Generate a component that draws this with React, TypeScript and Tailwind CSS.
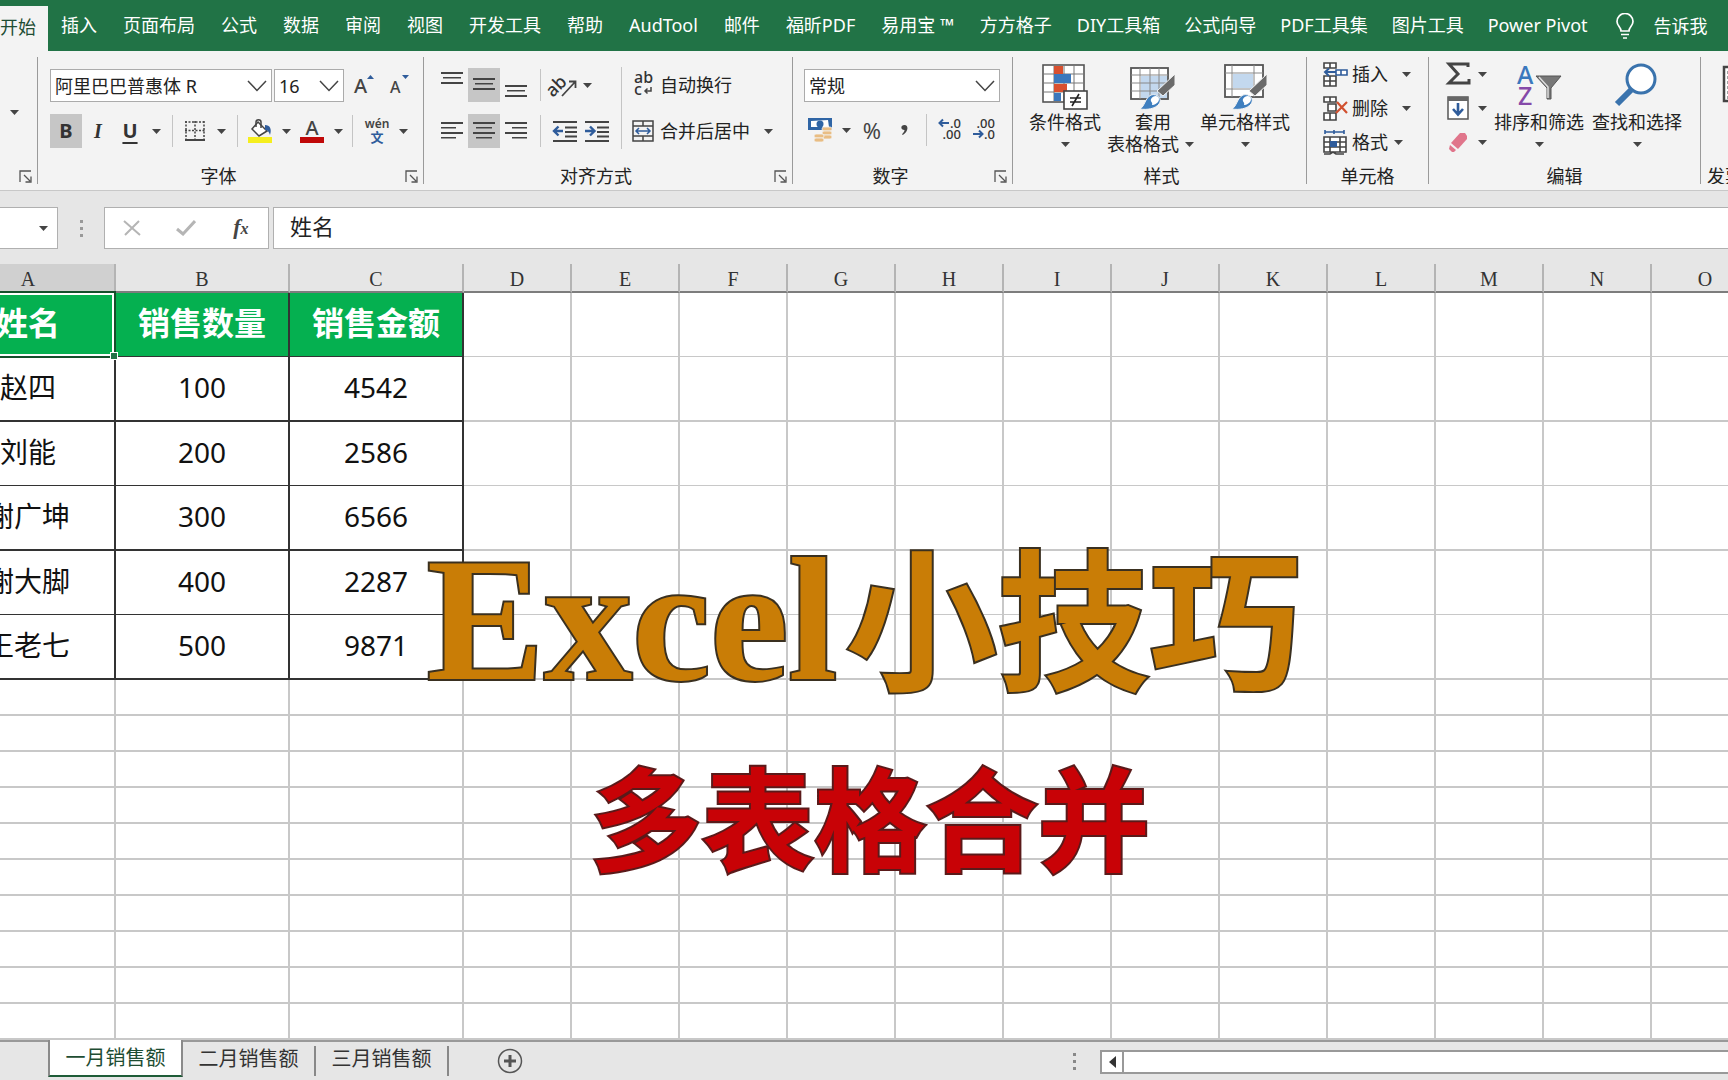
import { ReactNode } from "react";
import clsx from "clsx";

const MENU = [
  "插入",
  "页面布局",
  "公式",
  "数据",
  "审阅",
  "视图",
  "开发工具",
  "帮助",
  "AudTool",
  "邮件",
  "福昕PDF",
  "易用宝 ™",
  "方方格子",
  "DIY工具箱",
  "公式向导",
  "PDF工具集",
  "图片工具",
  "Power Pivot",
];

const COLUMNS = "ABCDEFGHIJKLMNOPQ".split("");

const ROWS = [
  ["姓名", "销售数量", "销售金额"],
  ["赵四", "100", "4542"],
  ["刘能", "200", "2586"],
  ["谢广坤", "300", "6566"],
  ["谢大脚", "400", "2287"],
  ["王老七", "500", "9871"],
];

const SHEETS = ["一月销售额", "二月销售额", "三月销售额"];

function Caret({ className = "w-5" }: { className?: string }) {
  return (
    <span className={clsx("flex shrink-0 justify-center", className)}>
      <svg width="9" height="5" viewBox="0 0 9 5">
        <path d="M0 0h9L4.500 5z" fill="#444" />
      </svg>
    </span>
  );
}

function IconButton({
  label,
  active,
  className = "w-8",
  children,
}: {
  label: string;
  active?: boolean;
  className?: string;
  children: ReactNode;
}) {
  return (
    <button
      aria-label={label}
      className={clsx(
        "flex h-[34px] shrink-0 items-center justify-center",
        className,
        active && "bg-[#c6c6c6]",
      )}
    >
      {children}
    </button>
  );
}

function Divider({ className = "mx-1" }: { className?: string }) {
  return <span className={clsx("h-8 w-px shrink-0 bg-[#c4c4c4]", className)} />;
}

function Dropdown({
  label,
  value,
  className,
}: {
  label: string;
  value: string;
  className: string;
}) {
  return (
    <div className={clsx("relative h-[33px] shrink-0", className)}>
      <select
        aria-label={label}
        className="h-full w-full appearance-none border border-[#ababab] bg-white px-1 text-lg leading-6"
      >
        <option>{value}</option>
      </select>
      <svg
        className="pointer-events-none absolute right-[5px] top-[11px]"
        width="20"
        height="12"
        viewBox="0 0 20 12"
        fill="none"
        stroke="#444"
        strokeWidth="1.500"
      >
        <path d="M1 1l9 9.500L19 1" />
      </svg>
    </div>
  );
}

function Group({
  title,
  className,
  launcher,
  children,
}: {
  title: string;
  className: string;
  launcher?: boolean;
  children: ReactNode;
}) {
  return (
    <section className={clsx("my-1.5 flex shrink-0 flex-col border-r border-[#9a9a9a]", className)}>
      <div className="flex h-[111px]">{children}</div>
      <div className="flex h-4 items-center">
        <h2 className="flex-1 whitespace-nowrap text-center text-lg leading-6">{title}</h2>
        {launcher && <Launcher />}
      </div>
    </section>
  );
}

function Launcher() {
  return (
    <button aria-label="更多选项" className="w-6 pl-1.5">
      <svg width="13" height="13" viewBox="0 0 13 13" fill="none" stroke="#555" strokeWidth="1.300">
        <path d="M1 12V1h11M5 5l6 6M12 6.500V12H6.500" />
      </svg>
    </button>
  );
}

// horizontal strokes for the alignment buttons: [x, width] per line
function Lines({ rows, y = 2 }: { rows: number[][]; y?: number }) {
  return (
    <svg width="22" height="22" viewBox="0 0 22 22" fill="#444">
      {rows.map(([x, w], i) => (
        <rect key={i} x={x} y={y + i * 5} width={w} height={i % 2 ? 1.5 : 2} />
      ))}
    </svg>
  );
}

function Indent({ right }: { right?: boolean }) {
  return (
    <svg width="24" height="22" viewBox="0 0 24 22">
      <path d="M0 2h24M12 7.500h12M12 12h12M12 16.500h12M0 21h24" stroke="#444" strokeWidth="1.800" />
      <path
        d={right ? "M0 11h9M5 6.500l4.500 4.500L5 15.500" : "M10 11H1.500M5.500 6.500L1 11l4.500 4.500"}
        stroke="#2f5c9b"
        strokeWidth="2.400"
        fill="none"
      />
    </svg>
  );
}

function Brush() {
  return (
    <>
      <path d="M45 11v11L33 33l-6-5z" fill="#6a6a6a" stroke="#f3f3f3" />
      <path d="M10 46c5-3 5-11 11-14 6-2 12 4 8 9-4 5-12 6-19 5z" fill="#3f7fbf" stroke="#f3f3f3" />
      <path d="M21 36c2-4 8-4 8 0s-5 6-7 6c1-3-2-3-1-6z" fill="#fff" />
    </>
  );
}

function ConditionalIcon() {
  return (
    <svg width="48" height="48" viewBox="0 0 48 48">
      <rect x="2" y="2" width="41" height="37" fill="#fff" stroke="#555" strokeWidth="1.600" />
      <path d="M13 2v37M23 2v37M33 2v37M2 11h41M2 20h41M2 29h41" stroke="#777" />
      <path d="M13 3h9v8h-9zM13 21h13v8H13z" fill="#d9502f" />
      <path d="M13 11h17v9H13zM13 30h7v8h-7z" fill="#3b78bd" />
      <rect x="23" y="28" width="23" height="18" fill="#fff" stroke="#444" strokeWidth="1.600" />
      <path d="M29 35h11M29 39h11M38 31l-7 12" stroke="#222" strokeWidth="1.600" />
    </svg>
  );
}

function TableFormatIcon() {
  return (
    <svg width="46" height="48" viewBox="0 0 46 48">
      <rect x="1" y="5" width="37" height="31" fill="#fff" stroke="#555" strokeWidth="1.800" />
      <path d="M11 13h26v22H11z" fill="#c3d8ee" />
      <path d="M10 5v31M20 5v31M29 5v31M1 12h37M1 20h37M1 28h37" stroke="#888" />
      <Brush />
    </svg>
  );
}

function CellStyleIcon() {
  return (
    <svg width="46" height="48" viewBox="0 0 46 48">
      <rect x="3" y="2" width="38" height="32" fill="#fff" stroke="#555" strokeWidth="1.800" />
      <path d="M10 2v32M32 2v32M3 10h38M3 26h38" stroke="#888" />
      <path d="M11 11h20v14H11z" fill="#c3d8ee" />
      <Brush />
    </svg>
  );
}

function BigButton({
  icon,
  lines,
  className,
}: {
  icon: ReactNode;
  lines: string[];
  className: string;
}) {
  return (
    <button
      className={clsx(
        "flex shrink-0 flex-col items-center pt-1.5 text-lg leading-[22px]",
        className,
      )}
    >
      {icon}
      <span className="whitespace-nowrap">{lines[0]}</span>
      <span className="flex h-[22px] items-center whitespace-nowrap">
        {lines[1]}
        <Caret />
      </span>
    </button>
  );
}

function CellButton({ icon, text, wide }: { icon: ReactNode; text: string; wide?: boolean }) {
  return (
    <button className="flex h-[34px] items-center text-lg">
      {icon}
      <span className="ml-1">{text}</span>
      <Caret className={wide ? "w-9" : "w-5"} />
    </button>
  );
}

function Ribbon() {
  return (
    <div className="flex h-[140px] shrink-0 overflow-hidden border-b border-[#c8c8c8] bg-[#f3f3f3] [&_svg]:overflow-visible">
      <section className="my-1.5 flex w-[38px] shrink-0 flex-col border-r border-[#9a9a9a]">
        <div className="flex h-[111px] flex-col justify-center pl-1">
          <IconButton label="复制选项" className="w-5">
            <Caret />
          </IconButton>
        </div>
        <div className="flex h-4 items-center justify-end">
          <Launcher />
        </div>
      </section>

      <Group title="字体" launcher className="w-[386px]">
        <div className="flex flex-col gap-[11px] pl-3 pt-3">
          <div className="flex gap-0.5">
            <Dropdown label="字体" value="阿里巴巴普惠体 R" className="w-[222px]" />
            <Dropdown label="字号" value="16" className="w-[70px]" />
            <IconButton label="增大字号" className="w-9">
              <svg width="22" height="24" viewBox="0 0 22 24">
                <text x="1" y="19" fontSize="20" fontWeight="500" fill="#444">A</text>
                <path d="M14 5l3.500-4L21 5z" fill="#2f5c9b" />
              </svg>
            </IconButton>
            <IconButton label="减小字号">
              <svg width="22" height="24" viewBox="0 0 22 24">
                <text x="1" y="19" fontSize="16" fontWeight="500" fill="#444">A</text>
                <path d="M13 1l3.500 4L20 1z" fill="#2f5c9b" />
              </svg>
            </IconButton>
          </div>
          <div className="flex items-center text-xl text-[#333]">
            <IconButton label="加粗" active>
              <b>B</b>
            </IconButton>
            <IconButton label="倾斜">
              <i className="font-['Liberation_Serif',serif] font-bold">I</i>
            </IconButton>
            <IconButton label="下划线">
              <b className="underline underline-offset-4">U</b>
            </IconButton>
            <Caret />
            <Divider className="mx-1.5" />
            <IconButton label="边框">
              <svg width="20" height="20" viewBox="0 0 20 20" stroke="#444">
                <path d="M0 1h20M1 0v18M19 0v18M10 0v18M0 9.500h20" strokeDasharray="2 1.500" strokeWidth="1.500" />
                <path d="M0 19h20" strokeWidth="2" />
              </svg>
            </IconButton>
            <Caret />
            <Divider className="mx-1.5" />
            <IconButton label="填充颜色">
              <svg width="24" height="24" viewBox="0 0 24 24">
                <path d="M10 3l9 9-8 5-7-7z" fill="#fff" stroke="#444" strokeWidth="1.500" />
                <path d="M8 8V3c0-3 5-3 5 0v6" fill="none" stroke="#444" strokeWidth="1.500" />
                <path d="M17 6c5 0 7 4 5 10-1-3-2-5-5-5z" fill="#2f5c9b" />
                <path d="M0 18h24v6H0z" fill="#f5ee1e" />
              </svg>
            </IconButton>
            <Caret />
            <IconButton label="字体颜色">
              <svg width="24" height="24" viewBox="0 0 24 24">
                <text x="12" y="16" fontSize="20" fontWeight="500" textAnchor="middle" fill="#444">A</text>
                <path d="M0 18h24v6H0z" fill="#c00808" />
              </svg>
            </IconButton>
            <Caret />
            <Divider />
            <IconButton label="拼音" className="w-10">
              <svg width="26" height="28" viewBox="0 0 26 28" textAnchor="middle">
                <text x="13" y="11" fontSize="12" fontWeight="600" fill="#444">wén</text>
                <text x="13" y="25" fontSize="13" fontWeight="700" fill="#2f5c9b">文</text>
              </svg>
            </IconButton>
            <Caret className="w-3" />
          </div>
        </div>
      </Group>

      <Group title="对齐方式" launcher className="w-[369px]">
        <div className="flex flex-col gap-3 pl-3 pt-[11px]">
          <div className="flex items-center">
            <IconButton label="顶端对齐">
              <Lines y={-2} rows={[[0, 22], [2, 18], [0, 22]]} />
            </IconButton>
            <IconButton label="垂直居中" active>
              <Lines y={4} rows={[[0, 22], [2, 18], [0, 22]]} />
            </IconButton>
            <IconButton label="底端对齐">
              <Lines y={11} rows={[[0, 22], [2, 18], [0, 22]]} />
            </IconButton>
            <Divider className="mx-2" />
            <IconButton label="方向">
              <svg width="28" height="26" viewBox="0 0 28 26">
                <text x="-5" y="18" fontSize="18" fontWeight="500" fill="#333" transform="rotate(-45 8 14)">ab</text>
                <path d="M11 24L24 10M18 9.500h6.500V16" fill="none" stroke="#444" strokeWidth="1.800" />
              </svg>
            </IconButton>
            <Caret className="w-3" />
          </div>
          <div className="flex items-center">
            <IconButton label="左对齐">
              <Lines rows={[[0, 22], [0, 15], [0, 22], [0, 15]]} />
            </IconButton>
            <IconButton label="居中" active>
              <Lines rows={[[0, 22], [3, 16], [0, 22], [3, 16]]} />
            </IconButton>
            <IconButton label="右对齐">
              <Lines rows={[[0, 22], [7, 15], [0, 22], [7, 15]]} />
            </IconButton>
            <Divider className="mx-2" />
            <IconButton label="减少缩进量">
              <Indent />
            </IconButton>
            <IconButton label="增加缩进量">
              <Indent right />
            </IconButton>
          </div>
        </div>
        <div className="ml-2 mt-2.5 h-[82px] w-px bg-[#c4c4c4]" />
        <div className="flex flex-col gap-3 pl-2.5 pt-[11px] text-lg">
          <button className="flex h-[34px] items-center gap-1.5">
            <svg width="22" height="24" viewBox="0 0 22 24">
              <text x="2" y="10" fontSize="16" fontWeight="500" fill="#333">ab</text>
              <text x="2" y="22" fontSize="16" fontWeight="500" fill="#333">c</text>
              <path d="M19 14v4h-6M15.500 15.500L13 18l2.500 2.500" fill="none" stroke="#444" strokeWidth="1.500" />
            </svg>
            自动换行
          </button>
          <button className="flex h-[34px] items-center gap-1.5">
            <svg width="22" height="22" viewBox="0 0 22 22" fill="none" stroke="#444" strokeWidth="1.500">
              <path d="M1 1h20v20H1zM1 6h20M1 16h20M11 1v5M11 16v5" />
              <path d="M4 11h14M7 8l-3 3 3 3M15 8l3 3-3 3" stroke="#2f5c9b" />
            </svg>
            合并后居中
            <Caret className="w-6" />
          </button>
        </div>
      </Group>

      <Group title="数字" launcher className="w-[220px]">
        <div className="flex flex-col gap-[11px] pl-[11px] pt-3">
          <Dropdown label="数字格式" value="常规" className="w-[196px]" />
          <div className="flex items-center text-[22px] text-[#444]">
            <IconButton label="会计数字格式">
              <svg width="26" height="26" viewBox="0 0 26 26">
                <path d="M1 1h24v12H1z" fill="#2f65a5" />
                <path d="M4 4l17-1 1 7H4z" fill="#fff" />
                <circle cx="13" cy="7" r="3.500" fill="#2f65a5" />
                <g fill="#e9bd83" stroke="#f3f3f3" strokeWidth=".8">
                  <rect x="15" y="10" width="10" height="4" rx="2" />
                  <rect x="15" y="14" width="10" height="4" rx="2" />
                  <rect x="15" y="18" width="10" height="4" rx="2" />
                  <rect x="7" y="17" width="10" height="4" rx="2" />
                  <rect x="7" y="21" width="10" height="4" rx="2" />
                </g>
              </svg>
            </IconButton>
            <Caret />
            <IconButton label="百分比样式">%</IconButton>
            <IconButton label="千位分隔样式">
              <svg width="7" height="10" viewBox="0 0 8 12">
                <path d="M4 0c5 0 5 8-2 12l-1-1c2-2 3-3 3-5C-1 6-1 0 4 0z" fill="#444" />
              </svg>
            </IconButton>
            <Divider className="mx-1.5" />
            <IconButton label="增加小数位数">
              <svg width="24" height="24" viewBox="0 0 24 24" textAnchor="end" fontSize="13" fontWeight="500" fill="#333">
                <text x="24" y="10">.0</text>
                <text x="24" y="21">.00</text>
                <path d="M12 5H3M6 1.500L2.500 5 6 8.500" fill="none" stroke="#2f5c9b" strokeWidth="2" />
              </svg>
            </IconButton>
            <IconButton label="减少小数位数" className="w-9">
              <svg width="24" height="24" viewBox="0 0 24 24" textAnchor="end" fontSize="13" fontWeight="500" fill="#333">
                <text x="24" y="10">.00</text>
                <text x="24" y="21">.0</text>
                <path d="M2 16h9M8 12.500l3.500 3.500L8 19.500" fill="none" stroke="#2f5c9b" strokeWidth="2" />
              </svg>
            </IconButton>
          </div>
        </div>
      </Group>

      <Group title="样式" className="w-[294px] pl-1">
        <BigButton icon={<ConditionalIcon />} lines={["条件格式"]} className="w-24" />
        <BigButton icon={<TableFormatIcon />} lines={["套用", "表格格式"]} className="w-20" />
        <BigButton icon={<CellStyleIcon />} lines={["单元格样式"]} className="w-[104px]" />
      </Group>

      <Group title="单元格" className="w-[122px]">
        <div className="flex flex-col pl-4">
          <CellButton
            wide
            text="插入"
            icon={
              <svg width="25" height="25" viewBox="0 0 25 25" fill="#fff" stroke="#444" strokeWidth="1.600">
                <path d="M1 1h6v5H1zM7 1h6v5H7zM1 19h6v5H1zM7 19h6v5H7zM1 14h6v5H1zM7 14h6v5H7z" />
                <path d="M13 8h11v5H13zM18 8v5" stroke="#2f5c9b" />
                <path d="M13 10H2M6 6.500L2 10l4 4" fill="none" stroke="#2f5c9b" strokeWidth="2" />
              </svg>
            }
          />
          <CellButton
            wide
            text="删除"
            icon={
              <svg width="25" height="25" viewBox="0 0 25 25" fill="#fff" stroke="#444" strokeWidth="1.600">
                <path d="M1 1h6v5H1zM7 1h6v5H7zM5 8h8v7H5zM1 17h6v7H1zM7 17h6v7H7z" />
                <path d="M14 6l10 11M24 6L13 17" stroke="#d1502f" strokeWidth="2.200" />
              </svg>
            }
          />
          <CellButton
            text="格式"
            icon={
              <svg width="25" height="25" viewBox="0 0 25 25" fill="#fff" stroke="#444" strokeWidth="1.600">
                <path d="M1 7h22v15H1zM1 12h22M1 17h22M7 7v15M17 7v15M1 24h6l3-2 3 2h8" />
                <path d="M2 2h19M2 0v4M21 0v4M11 0v4" stroke="#2f5c9b" />
                <path d="M7 11h7v6H7z" fill="#2f5c9b" stroke="none" />
              </svg>
            }
          />
        </div>
      </Group>

      <Group title="编辑" className="w-[272px]">
        <div className="flex flex-col pl-[13px]">
          <button aria-label="自动求和" className="flex h-[34px] items-center">
            <span className="flex w-8 justify-center">
              <svg width="24" height="24" viewBox="0 0 24 24">
                <path d="M22 5V2H3l9 10-9 9h20v-4" fill="none" stroke="#444" strokeWidth="3" />
              </svg>
            </span>
            <Caret className="w-4" />
          </button>
          <button aria-label="填充" className="flex h-[34px] items-center">
            <span className="flex w-8 justify-center">
              <svg width="22" height="24" viewBox="0 0 22 24">
                <path d="M1 1h20v22H1z" fill="#fff" stroke="#555" strokeWidth="1.500" />
                <path d="M1 1h20v4H1z" fill="#666" />
                <path d="M11 7v11M6 13l5 5.500 5-5.500" fill="none" stroke="#2f5c9b" strokeWidth="2.600" />
              </svg>
            </span>
            <Caret className="w-4" />
          </button>
          <button aria-label="清除" className="flex h-[34px] items-center">
            <span className="flex w-8 justify-center">
              <svg width="22" height="22" viewBox="0 0 22 22">
                <path d="M13 2h5l2 3v3l-9 10-7-6z" fill="#e0758b" />
                <path d="M3 14l6 5-2 2H5l-3-3z" fill="#e0758b" />
              </svg>
            </span>
            <Caret className="w-4" />
          </button>
        </div>
        <BigButton
          className="w-[98px]"
          lines={["排序和筛选"]}
          icon={
            <svg width="48" height="48" viewBox="0 0 48 48">
              <text x="2" y="21" fontSize="25" fontWeight="500" fill="#3b78bd">A</text>
              <text x="3" y="42" fontSize="25" fontWeight="500" fill="#8549a8">Z</text>
              <path d="M21 13h25L36 25v11h-4V25z" fill="#777" stroke="#555" />
              <path d="M24 14l9 10v11" fill="none" stroke="#ddd" strokeWidth="1.500" />
            </svg>
          }
        />
        <BigButton
          className="w-[98px]"
          lines={["查找和选择"]}
          icon={
            <svg width="48" height="48" viewBox="0 0 48 48">
              <path d="M18 27L4 41" stroke="#3a73ad" strokeWidth="6" />
              <circle cx="28" cy="16" r="14" fill="#fff" stroke="#3a73ad" strokeWidth="3" />
            </svg>
          }
        />
      </Group>

      <section className="my-1.5 flex min-w-0 flex-1 flex-col overflow-hidden pl-1.5">
        <button aria-label="发票查验" className="flex h-[111px] items-start pl-3.5">
          <svg className="mt-2 shrink-0" width="30" height="38" viewBox="0 0 30 38">
            <path d="M3 2h27v34H3z" fill="#fff" stroke="#444" strokeWidth="2.500" />
            <path d="M8 6v28" stroke="#444" strokeWidth="3" strokeDasharray="3 2" />
          </svg>
        </button>
        <h2 className="h-4 whitespace-nowrap text-lg leading-4">发票</h2>
      </section>
    </div>
  );
}

function FormulaBar() {
  return (
    <div className="flex h-[73px] shrink-0 bg-[#e6e6e6] pb-[15px] pt-4">
      <button
        aria-label="名称框"
        className="flex w-[58px] shrink-0 items-center justify-end border border-l-0 border-[#b0b0b0] bg-white pr-1"
      >
        <Caret />
      </button>
      <div className="flex w-[46px] shrink-0 flex-col items-center justify-center gap-1">
        <i className="h-[3px] w-[3px] bg-[#999]" />
        <i className="h-[3px] w-[3px] bg-[#999]" />
        <i className="h-[3px] w-[3px] bg-[#999]" />
      </div>
      <div className="flex w-[165px] shrink-0 items-center border border-[#b0b0b0] bg-white">
        <button aria-label="取消" className="flex flex-1 justify-center">
          <svg width="18" height="16" viewBox="0 0 18 16" stroke="#b5b5b5" strokeWidth="2">
            <path d="M1 1l16 14M16 1L2 15" />
          </svg>
        </button>
        <button aria-label="输入" className="flex flex-1 justify-center">
          <svg width="20" height="16" viewBox="0 0 20 16" fill="none" stroke="#b5b5b5" strokeWidth="3">
            <path d="M1 9l6 5L19 1" />
          </svg>
        </button>
        <button
          aria-label="插入函数"
          className="flex-1 font-['Liberation_Serif',serif] text-[22px] font-bold italic leading-6 text-[#444]"
        >
          f<span className="text-base">x</span>
        </button>
      </div>
      <input
        aria-label="编辑栏"
        defaultValue="姓名"
        className="ml-1 min-w-0 flex-1 border border-r-0 border-[#b0b0b0] bg-white px-4 pb-1 text-[22px] leading-8"
      />
    </div>
  );
}

function Grid() {
  return (
    <div className="min-h-0 flex-1 overflow-hidden bg-white">
      <table className="-ml-[58px] w-[2034px] table-fixed border-separate border-spacing-0 text-center">
        <colgroup>
          {COLUMNS.map((c, i) => (
            <col key={c} className={i < 3 ? "w-[174px]" : "w-[108px]"} />
          ))}
        </colgroup>
        <thead>
          <tr className="h-[29px]">
            {COLUMNS.map((c, i) => (
              <th
                key={c}
                className={clsx(
                  "border-b-2 border-r-2 border-b-[#7d7d7d] border-r-[#b4b4b4] p-0 pt-[3px] font-['Liberation_Serif',serif] text-xl font-normal leading-6 text-[#333]",
                  i === 0 ? "bg-[#d0d0d0]" : "bg-[#e6e6e6]",
                )}
              >
                {c}
              </th>
            ))}
          </tr>
        </thead>
        <tbody>
          {ROWS.map((row, r) => (
            <tr key={r} className="h-[64px] even:h-[65px]">
              {COLUMNS.map((c, i) => (
                <td
                  key={c}
                  className={clsx(
                    "relative border-r-2 p-0 pb-[3px]",
                    r % 2 ? "border-b-2" : "border-b",
                    i < 3 ? "border-[#333]" : "border-[#c8c8c8]",
                    r === 0 && i < 3
                      ? "bg-[#05b050] text-[32px] font-bold leading-8 text-white"
                      : "text-[28px] leading-8 text-[#111]",
                  )}
                >
                  {row[i]}
                  {r === 0 && i === 0 && (
                    <>
                      <span className="absolute inset-0 border-2 border-white outline-2 outline-[#14502c]" />
                      <span className="absolute -bottom-1 -right-1 z-10 h-2 w-2 border border-white bg-[#217346]" />
                    </>
                  )}
                </td>
              ))}
            </tr>
          ))}
          {Array.from({ length: 10 }, (_, r) => (
            <tr key={r} className="h-9">
              {COLUMNS.map((c) => (
                <td key={c} className="border-b-2 border-r-2 border-[#c8c8c8] p-0" />
              ))}
            </tr>
          ))}
        </tbody>
      </table>
    </div>
  );
}

function SheetTabs() {
  return (
    <div className="flex h-10 shrink-0 border-t-2 border-[#999] bg-[#e6e6e6] text-[20px] leading-8 text-[#333]">
      <div className="flex shrink-0 pl-12">
        {SHEETS.map((s, i) =>
          i === 0 ? (
            <button
              key={s}
              className="-mt-0.5 h-[37px] w-[135px] border-x-2 border-b-2 border-x-[#8a8a8a] border-b-[#1e5c38] bg-white text-[#1e4d33]"
            >
              {s}
            </button>
          ) : (
            <button key={s} className="my-1 w-[133px] border-r-2 border-[#888] pb-1 leading-6">
              {s}
            </button>
          ),
        )}
        <button aria-label="新工作表" className="ml-12 flex items-center">
          <svg width="26" height="26" viewBox="0 0 26 26" fill="none" stroke="#555">
            <circle cx="13" cy="13" r="11.500" strokeWidth="1.500" />
            <path d="M13 7v12M7 13h12" strokeWidth="3" />
          </svg>
        </button>
      </div>
      <div className="flex flex-1 justify-end pr-6">
        <div className="flex flex-col justify-center gap-1">
          <i className="h-[3px] w-[3px] bg-[#888]" />
          <i className="h-[3px] w-[3px] bg-[#888]" />
          <i className="h-[3px] w-[3px] bg-[#888]" />
        </div>
      </div>
      <div className="mt-2 flex h-6 w-[628px] shrink-0 border-2 border-r-0 border-[#999] bg-white">
        <button
          aria-label="向左滚动"
          className="flex w-[22px] items-center justify-center border-r-2 border-[#999]"
        >
          <svg width="7" height="12" viewBox="0 0 7 12">
            <path d="M7 0v12L0 6z" fill="#333" />
          </svg>
        </button>
      </div>
    </div>
  );
}

export default function App() {
  return (
    <div className="relative flex h-screen flex-col overflow-hidden bg-white font-['Noto_Sans','Noto_Sans_CJK_SC',sans-serif] text-[#222]">
      <nav className="flex h-[51px] shrink-0 overflow-hidden whitespace-nowrap bg-[#217346] text-lg text-white">
        <button className="mt-1.5 w-12 shrink-0 bg-[#f3f3f3] pb-1 pr-3 text-right text-[#1e4d33]">
          <span className="-ml-4">开始</span>
        </button>
        {MENU.map((m, i) => (
          <button key={m} className={clsx("shrink-0 pb-px", i < 13 ? "px-[13px]" : "px-3")}>
            {m}
          </button>
        ))}
        <button className="ml-4 flex shrink-0 items-center gap-5">
          <svg width="18" height="26" viewBox="0 0 18 26" fill="none" stroke="#fff" strokeWidth="1.700">
            <path d="M5 18c0-4-4-5-4-9.500a8 8 0 0 1 16 0C17 13 13 14 13 18zM5 21.500h8M7 25h4" />
          </svg>
          告诉我
        </button>
      </nav>
      <Ribbon />
      <FormulaBar />
      <Grid />
      <SheetTabs />

      <div className="pointer-events-none absolute inset-x-0 top-[520px] flex flex-col items-center whitespace-nowrap font-bold">
        <h1 className="text-[152px] leading-[200px] text-[#c97d06] [-webkit-text-stroke:4px_#3a3020] [paint-order:stroke_fill]">
          <span className="mr-2 font-['Liberation_Serif',serif] text-[176px]">Excel</span>
          小技巧
        </h1>
        <p className="mt-6 pl-3 text-[112px] leading-[150px] text-[#c80206] [-webkit-text-stroke:4px_#5a1a1a] [paint-order:stroke_fill]">
          多表格合并
        </p>
      </div>
    </div>
  );
}
